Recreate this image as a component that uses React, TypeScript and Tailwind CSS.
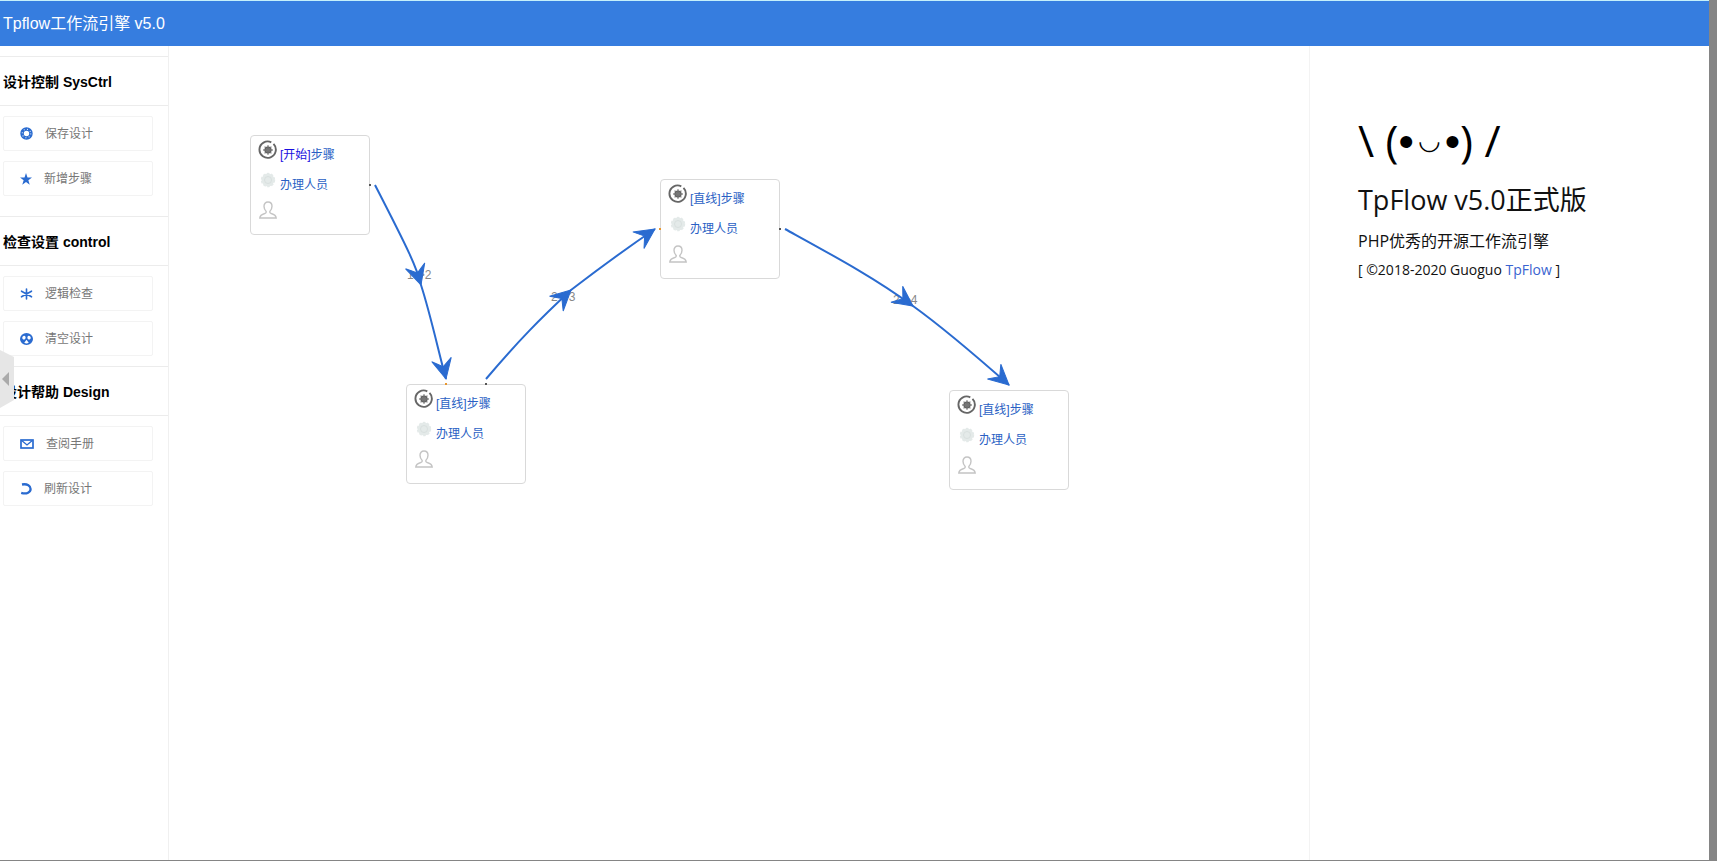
import type { ReactNode } from "react";

const BLUE = "#2a6bd0";

function GearIcon() {
  return (
    <svg width="13" height="13" viewBox="0 0 14 14" aria-hidden>
      <circle cx="7" cy="7" r="4.8" fill="none" stroke={BLUE} strokeWidth="3.8" />
      <circle cx="7" cy="7" r="4.6" fill="none" stroke="#fff" strokeWidth="1.1" strokeDasharray="1 2.61" />
    </svg>
  );
}

function StarIcon() {
  return (
    <svg width="12" height="12" viewBox="0 0 24 24" aria-hidden>
      <path fill={BLUE} d="M12 0l3 9h9l-7.3 5.4 2.8 9L12 18l-7.5 5.4 2.8-9L0 9h9z" />
    </svg>
  );
}

function AsteriskIcon() {
  return (
    <svg width="13" height="12" viewBox="0 0 13 12" aria-hidden>
      <g stroke={BLUE} strokeWidth="1.6" strokeLinecap="round">
        <path d="M6.5 1v10M1.5 3.2l10 5.6M11.5 3.2l-10 5.6" />
      </g>
    </svg>
  );
}

function ClearIcon() {
  return (
    <svg width="13" height="12" viewBox="0 0 26 24" aria-hidden>
      <ellipse cx="13" cy="12" rx="13" ry="12" fill={BLUE} />
      <g fill="#fff">
        <path d="M4.500 9.500a3.500 3.500 0 0 1 6.500-2c.8 2.500-.5 5-2.500 5.500s-4-1.500-4-3.500z" />
        <path d="M21.500 9.500a3.500 3.500 0 0 0-6.500-2c-.8 2.500.5 5 2.500 5.500s4-1.500 4-3.500z" />
        <path d="M13 13.500l4.500 6c-2.800 1.800-6.200 1.800-9 0z" />
      </g>
    </svg>
  );
}

function MailIcon() {
  return (
    <svg width="14" height="10" viewBox="0 0 14 10" aria-hidden>
      <rect x="1" y="1" width="12" height="8" fill="none" stroke={BLUE} strokeWidth="1.7" />
      <path d="M2 1.8l5 4.2 5-4.2" fill="none" stroke={BLUE} strokeWidth="1.3" />
    </svg>
  );
}

function RefreshIcon() {
  return (
    <svg width="12" height="12" viewBox="0 0 12 12" aria-hidden>
      <path d="M2 1.5C7.500 .5 10.600 3 10.600 6S7 11.700 1.200 9.800" fill="none" stroke={BLUE} strokeWidth="2.3" />
    </svg>
  );
}

function StepIcon() {
  return (
    <svg width="20" height="20" viewBox="0 0 20 20" className="shrink-0" aria-hidden>
      <path d="M13.3 2.3A8.2 8.2 0 1 0 15.5 3.9" fill="none" stroke="#666" strokeWidth="1.9" />
      <circle cx="10" cy="10" r="3.6" fill="#555" />
      <g stroke="#777" strokeWidth="1.3">
        <path d="M10 5.2v9.6M5.2 10h9.6M6.6 6.6l6.8 6.8M13.4 6.6l-6.8 6.8" />
      </g>
    </svg>
  );
}

function BadgeIcon() {
  return (
    <svg width="20" height="20" viewBox="0 0 20 20" className="shrink-0" aria-hidden>
      <circle cx="10" cy="10" r="6.5" fill="#e4eae9" />
      <circle cx="10" cy="10" r="6.5" fill="none" stroke="#e4eae9" strokeWidth="1.4" strokeDasharray="2.6 1.5" />
      <circle cx="10" cy="10" r="3.5" fill="none" stroke="#d9e0df" />
    </svg>
  );
}

function UserIcon() {
  return (
    <svg width="20" height="20" viewBox="0 0 20 20" className="shrink-0" aria-hidden>
      <path
        d="M8.2 11.5C6.6 10 6 8.3 6 6.3 6 3.7 7.5 2 10 2s4 1.7 4 4.3c0 2-.6 3.7-2.2 5.2-.3 1.2.2 1.6 1.4 2 2.8.8 4.800 1.600 5 4.500H1.800c.2-2.900 2.200-3.700 5-4.500 1.200-.4 1.700-.8 1.400-2z"
        fill="none"
        stroke="#c4c4c4"
        strokeWidth="1.4"
      />
    </svg>
  );
}

type Item = { label: string; icon: ReactNode };

function Section({ title, items, className = "" }: { title: string; items: Item[]; className?: string }) {
  return (
    <section className={className}>
      <h2 className="flex h-[50px] items-center border-y border-[#ececec] pt-[2px] pl-[3px] text-sm font-bold text-black">
        {title}
      </h2>
      <div className="flex flex-col gap-[10px] py-[10px] pr-[15px] pl-[3px]">
        {items.map((item) => (
          <button
            key={item.label}
            type="button"
            className="flex h-[35px] items-center gap-3 rounded-[2px] border border-[#f3f3f3] pl-4 text-xs text-[#777]"
          >
            {item.icon}
            {item.label}
          </button>
        ))}
      </div>
    </section>
  );
}

const nodes = [
  { id: 1, kind: "[开始]", start: true, place: "left-[81px] top-[89px]" },
  { id: 2, kind: "[直线]", start: false, place: "left-[237px] top-[338px]" },
  { id: 3, kind: "[直线]", start: false, place: "left-[491px] top-[133px]" },
  { id: 4, kind: "[直线]", start: false, place: "left-[780px] top-[344px]" },
];

const labels = [
  { text: "1->2", place: "left-[238px] top-[221px]" },
  { text: "2->3", place: "left-[382px] top-[243px]" },
  { text: "2->4", place: "left-[724px] top-[246px]" },
];

// Arrow head, tip at x/y, pointing along angle
function Head({ x, y, angle }: { x: number; y: number; angle: number }) {
  return (
    <path
      d="M0 0L-20 -10L-12.5 0L-20 10Z"
      fill={BLUE}
      stroke={BLUE}
      transform={`translate(${x} ${y}) rotate(${angle})`}
    />
  );
}

function Canvas() {
  return (
    <main className="relative min-w-0 flex-1 overflow-hidden">
      {labels.map((l) => (
        <span key={l.text} className={`absolute text-xs leading-4 text-[#888] ${l.place}`}>
          {l.text}
        </span>
      ))}
      {nodes.map((n) => (
        <div
          key={n.id}
          className={`absolute flex h-[100px] w-[120px] flex-col gap-[10px] rounded-[4px] border border-[#d9d9d9] bg-white pt-1 pl-[7px] text-xs leading-5 text-[#2a5fc4] ${n.place}`}
        >
          <div className="flex h-5 gap-[2px]">
            <StepIcon />
            <span className="pt-[5px]">
              <span className={n.start ? "text-[#1a10e0]" : ""}>{n.kind}</span>步骤
            </span>
          </div>
          <div className="flex h-5 gap-[2px]">
            <BadgeIcon />
            <span className="pt-[5px]">办理人员</span>
          </div>
          <UserIcon />
        </div>
      ))}
      <svg className="pointer-events-none absolute top-0 left-0" width="1140" height="814" aria-hidden>
        <g fill="none" stroke={BLUE} strokeWidth="2">
          <path d="M206 139C240 205 248 222 252 239C262 270 270 308 277 333" />
          <path d="M317 333C350 294 372 272 402 244C432 221 458 202 486 183" />
          <path d="M616 183C665 210 706 232 744 260C776 283 806 309 840 339" />
        </g>
        <Head x={252} y={239} angle={73} />
        <Head x={277} y={333} angle={77} />
        <Head x={402} y={244} angle={-43} />
        <Head x={486} y={183} angle={-34} />
        <Head x={744} y={260} angle={36} />
        <Head x={840} y={339} angle={42} />
        <g fill="#555">
          <rect x="200" y="138" width="2" height="2" />
          <rect x="316" y="337" width="2" height="2" />
          <rect x="610" y="182" width="2" height="2" />
        </g>
        <g fill="#e8962e">
          <rect x="276" y="337" width="2" height="2" />
          <rect x="490" y="182" width="2" height="2" />
        </g>
      </svg>
    </main>
  );
}

export default function App() {
  return (
    <div className="min-h-screen border-r-8 border-b border-[#858585] bg-white font-['Liberation_Sans','Noto_Sans_CJK_SC',sans-serif]">
      <div className="flex min-h-[calc(100vh-1px)] flex-col">
        <header className="flex h-[46px] items-center border-t border-[#c5f0fb] bg-[#367ddf] pl-[3px]">
          <h1 className="text-base text-white">Tpflow工作流引擎 v5.0</h1>
        </header>
        <div className="flex flex-1">
          <aside className="relative w-[169px] shrink-0 border-r border-[#f0f0f0] pt-[10px]">
            <Section
              title="设计控制 SysCtrl"
              className="mb-[10px]"
              items={[
                { label: "保存设计", icon: <GearIcon /> },
                { label: "新增步骤", icon: <StarIcon /> },
              ]}
            />
            <Section
              title="检查设置 control"
              items={[
                { label: "逻辑检查", icon: <AsteriskIcon /> },
                { label: "清空设计", icon: <ClearIcon /> },
              ]}
            />
            <Section
              title="设计帮助 Design"
              items={[
                { label: "查阅手册", icon: <MailIcon /> },
                { label: "刷新设计", icon: <RefreshIcon /> },
              ]}
            />
            <button type="button" aria-label="收起" className="absolute top-[304px] left-0">
              <svg width="14" height="58" viewBox="0 0 14 58" aria-hidden>
                <path d="M0 0L14 7V50L0 58Z" fill="#e6e6e6" />
                <path d="M9 22V36L2 29Z" fill="#aaa" />
              </svg>
            </button>
          </aside>
          <Canvas />
          <aside className="w-[400px] shrink-0 border-l border-[#f3f3f3] pt-16 pl-12 font-['Open_Sans','Noto_Sans_CJK_SC',sans-serif] text-[#111]">
            <p className="h-[60px] text-[44px] leading-[60px] text-black">
              \ (<span className="font-['Liberation_Sans',sans-serif]">•</span>
              <span className="mx-1 align-[8px] font-['DejaVu_Sans',sans-serif] text-[26px] leading-none">◡</span>
              <span className="font-['Liberation_Sans',sans-serif]">•</span>) /
            </p>
            <h2 className="mt-2 text-[27px] leading-[44px]">TpFlow v5.0正式版</h2>
            <p className="mt-1 text-base leading-[30px]">PHP优秀的开源工作流引擎</p>
            <p className="text-sm leading-7">
              [ ©2018-2020 Guoguo{" "}
              <a href="#" className="text-[#3a63d0]">
                TpFlow
              </a>{" "}
              ]
            </p>
          </aside>
        </div>
      </div>
    </div>
  );
}
